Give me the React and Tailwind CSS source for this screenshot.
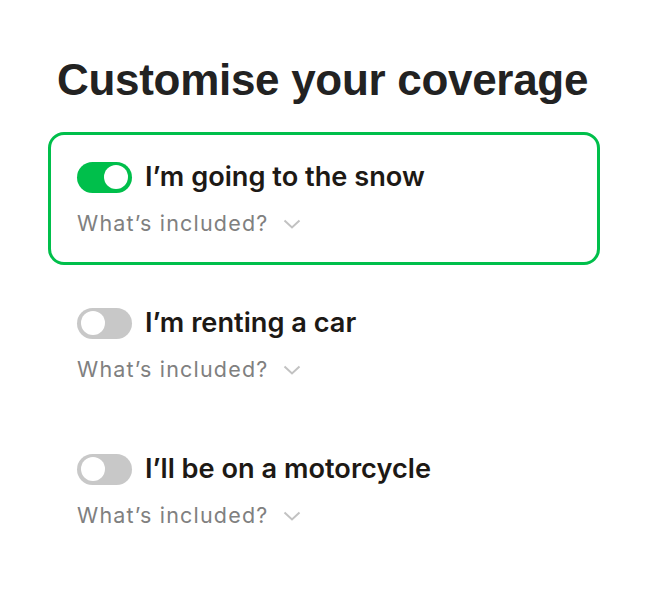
import { useState } from "react";

const options = [
  { id: "snow", label: "I’m going to the snow", on: true },
  { id: "car", label: "I’m renting a car", on: false },
  { id: "moto", label: "I’ll be on a motorcycle", on: false },
];

function Toggle({ on, onClick }) {
  return (
    <button
      onClick={onClick}
      className={`flex h-[31px] w-[55px] shrink-0 items-center rounded-full px-[4px] ${
        on ? "justify-end bg-[#00bf4b]" : "justify-start bg-[#c8c8c8]"
      }`}
    >
      <span className="h-[24px] w-[24px] rounded-full bg-white" />
    </button>
  );
}

function Chevron() {
  return (
    <svg width="18" height="10" viewBox="0 0 18 10" fill="none" className="mt-[2px]">
      <path d="M1.5 1.5 L9 8.5 L16.5 1.5" stroke="#c2c2c2" strokeWidth="2" />
    </svg>
  );
}

export default function App() {
  const [state, setState] = useState(options.map((o) => o.on));

  return (
    <div className="min-h-[601px] w-full bg-white pt-[55px] font-['Inter','Liberation_Sans',sans-serif]">
      <h1 className="pl-[57px] font-['Liberation_Sans',Arial,sans-serif] text-[44px] font-bold leading-[50px] tracking-[-0.3px] text-[#222]">
        Customise your coverage
      </h1>

      <div className="mt-[27px] flex w-[552px] flex-col gap-[13px] ml-[48px]">
        {options.map((o, i) => (
          <div
            key={o.id}
            className={`h-[133px] rounded-[16px] border-[3px] px-[26px] pt-[24px] ${
              state[i] ? "border-[#00bf4b]" : "border-transparent"
            }`}
          >
            <div className="flex items-center gap-[13px]">
              <Toggle
                on={state[i]}
                onClick={() => setState(state.map((s, j) => (j === i ? !s : s)))}
              />
              <span className="text-[27.2px] font-semibold leading-[36px] tracking-[0px] text-[#1d1915]">
                {o.label}
              </span>
            </div>
            <div className="mt-[12px] flex items-center gap-[14px]">
              <span className="text-[21.5px] leading-[32px] tracking-[1.2px] text-[#808080]">
                What’s included?
              </span>
              <Chevron />
            </div>
          </div>
        ))}
      </div>
    </div>
  );
}
